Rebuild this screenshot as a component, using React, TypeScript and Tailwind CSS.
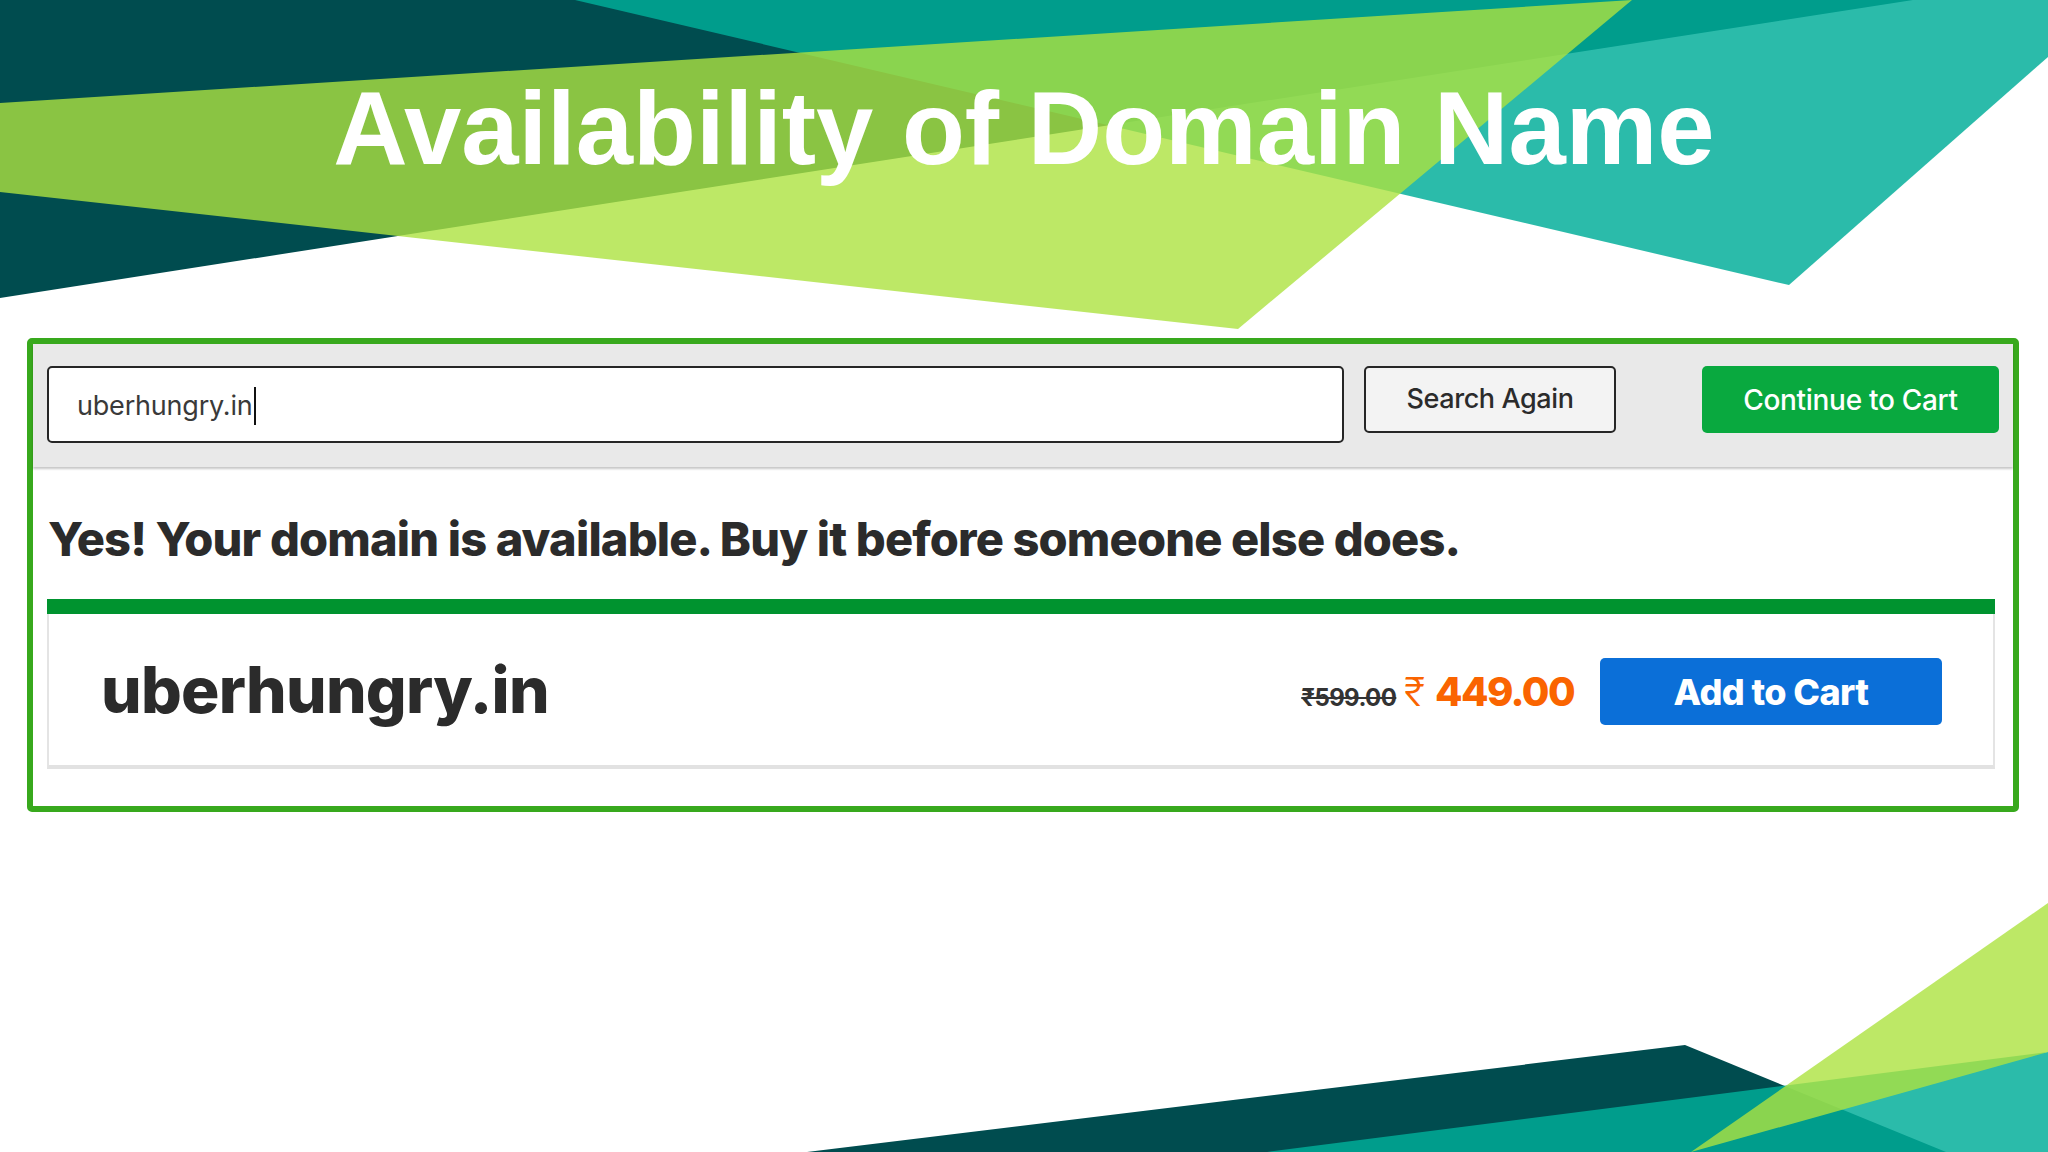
import React from "react";

// slide decoration: layered translucent triangles, coords in slide pixels
function Backdrop() {
  return (
    <svg
      className="absolute inset-0"
      width="2048"
      height="1152"
      viewBox="0 0 2048 1152"
    >
      {/* top-left cluster */}
      <polygon points="0,0 1913,0 0,298" fill="#004c4f" />
      <polygon points="575,0 2048,0 2048,57 1789,285" fill="#00ad99" fillOpacity="0.83" />
      <polygon points="0,103 1632,0 1238,329 0,192" fill="#ade240" fillOpacity="0.8" />
      {/* bottom-right cluster */}
      <polygon points="807,1152 1685,1045 1946,1152" fill="#004c4f" />
      <polygon points="1267,1152 2048,1052 2048,1152" fill="#00ad99" fillOpacity="0.83" />
      <polygon points="2048,903 1691,1152 2048,1052" fill="#ade240" fillOpacity="0.8" />
    </svg>
  );
}

function SearchBar() {
  return (
    <div className="flex h-[123px] items-start bg-[#e9e9e9] px-[14px] pt-[22px] shadow-[0_2px_2px_rgba(0,0,0,0.22)]">
      <div className="flex h-[77px] w-[1297px] items-center rounded-[5px] border-2 border-[#262626] bg-white pl-[28px] pt-[3px]">
        <span className="text-[27px] tracking-[-0.2px] text-[#3a3a3a]">uberhungry.in</span>
        <span className="ml-[1px] h-[38px] w-[2px] bg-[#111]" />
      </div>
      <button className="ml-[20px] flex h-[67px] w-[252px] items-center justify-center rounded-[5px] border-2 border-[#262626] bg-[#f3f3f3] text-[27px] font-medium tracking-[-0.4px] text-[#2b2b2b]">
        Search Again
      </button>
      <button className="ml-[86px] flex h-[67px] w-[297px] items-center justify-center rounded-[5px] bg-[#09a93f] text-[28px] font-medium tracking-[-0.3px] text-white">
        Continue to Cart
      </button>
    </div>
  );
}

function ResultCard() {
  return (
    <div className="ml-[14px] mt-[37px] w-[1948px]">
      <div className="h-[15px] bg-[#00932f]" />
      <div className="flex h-[155px] items-center justify-between border-x-2 border-b-[4px] border-x-[#e4e4e4] border-b-[#e2e2e2] bg-white pl-[52px] pr-[51px]">
        <span className="text-[64px] font-extrabold leading-none tracking-[-0.7px] text-[#2b2b2b]">
          uberhungry.in
        </span>
        <div className="flex items-center pt-[4px]">
          <div className="flex items-baseline">
            <span className="text-[24px] font-bold tracking-[-0.6px] text-[#333] line-through">
              ₹599.00
            </span>
            <span className="ml-[8px] text-[40px] font-light text-[#fa6400]">₹</span>
            <span className="ml-[10px] text-[40px] font-extrabold tracking-[-1.6px] text-[#fa6400]">
              449.00
            </span>
          </div>
          <button className="ml-[26px] flex h-[67px] w-[342px] items-center justify-center rounded-[5px] bg-[#0b6fd8] text-[36px] font-extrabold tracking-[-0.6px] text-white">
            Add to Cart
          </button>
        </div>
      </div>
    </div>
  );
}

export default function App() {
  return (
    <div className="relative h-[1152px] w-[2048px] overflow-hidden bg-white font-['Inter',sans-serif]">
      <Backdrop />
      <div className="relative flex flex-col">
        <h1 className="pt-[77px] text-center font-['Liberation_Sans',Arial,sans-serif] text-[103px] font-bold leading-none text-white">
          Availability of Domain Name
        </h1>

        <section className="ml-[27px] mt-[158px] h-[474px] w-[1992px] rounded-[5px] border-[6px] border-[#38a91d] bg-white">
          <SearchBar />
          <p className="pl-[15px] pt-[48px] text-[47px] font-extrabold leading-none tracking-[-0.85px] text-[#2b2b2b]">
            Yes! Your domain is available. Buy it before someone else does.
          </p>
          <ResultCard />
        </section>
      </div>
    </div>
  );
}
